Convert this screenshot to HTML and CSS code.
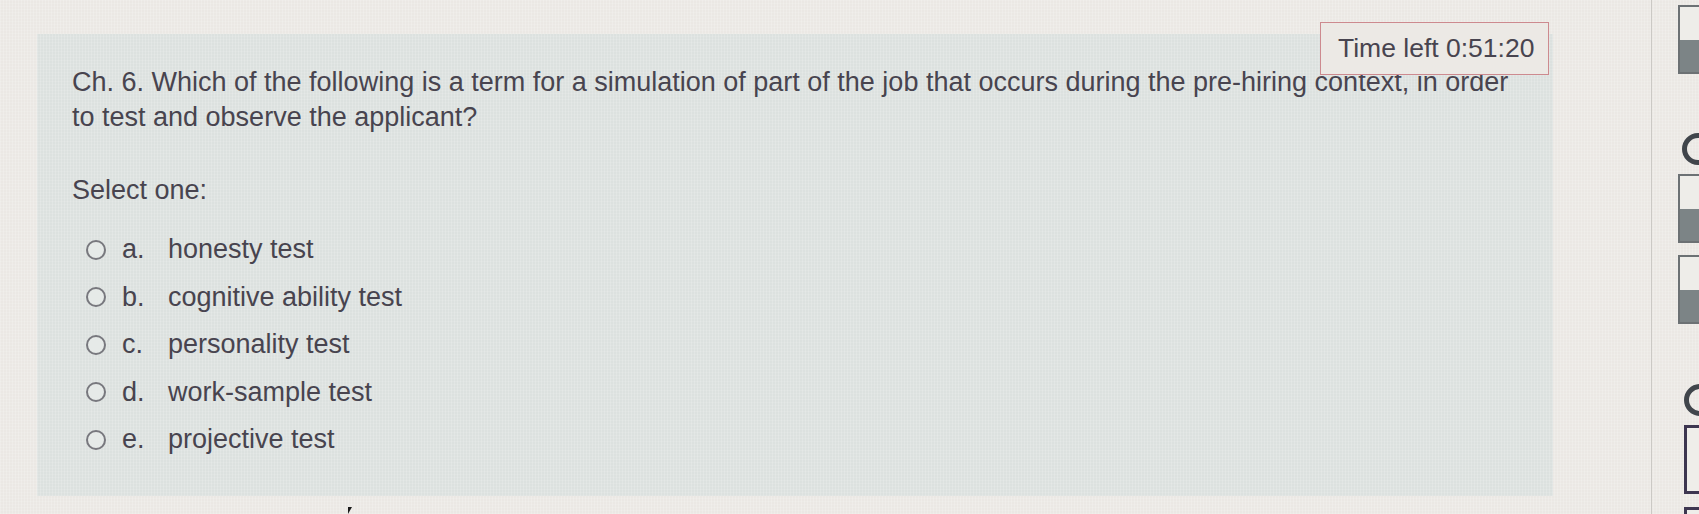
FILE: index.html
```html
<!DOCTYPE html>
<html lang="en">
<head>
<meta charset="utf-8">
<title>Quiz question</title>
<link rel="stylesheet" href="styles.css">
</head>
<body>
<div class="page">
  <main class="main">
    <div class="timer">Time left 0:51:20</div>
    <section class="panel">
      <p class="question">Ch. 6. Which of the following is a term for a simulation of part of the job that occurs during the pre-hiring context, in order to test and observe the applicant?</p>
      <p class="prompt">Select one:</p>
      <ul class="options">
        <li class="option"><span class="radio"></span><span class="letter">a.</span><span class="label">honesty test</span></li>
        <li class="option"><span class="radio"></span><span class="letter">b.</span><span class="label">cognitive ability test</span></li>
        <li class="option"><span class="radio"></span><span class="letter">c.</span><span class="label">personality test</span></li>
        <li class="option"><span class="radio"></span><span class="letter">d.</span><span class="label">work-sample test</span></li>
        <li class="option"><span class="radio"></span><span class="letter">e.</span><span class="label">projective test</span></li>
      </ul>
    </section>
    <div class="cursor"></div>
  </main>
  <aside class="sidebar">
    <div class="navbox split first"><span class="top"></span><span class="bottom"></span></div>
    <div class="ring ring1"></div>
    <div class="navbox split gap9"><span class="top"></span><span class="bottom"></span></div>
    <div class="navbox split gap12"><span class="top"></span><span class="bottom"></span></div>
    <div class="ring ring2"></div>
    <div class="navbox current gap9"></div>
    <div class="navbox current gap13"></div>
  </aside>
</div>
</body>
</html>
```

FILE: styles.css
```css
html, body {
  margin: 0;
  padding: 0;
}

body {
  width: 1699px;
  height: 514px;
  overflow: hidden;
  background-color: #ebe8e4;
  background-image:
    repeating-linear-gradient(90deg, rgba(255,255,255,0.18) 0 1px, transparent 1px 3px),
    repeating-linear-gradient(0deg, rgba(255,255,255,0.12) 0 1px, transparent 1px 3px);
  font-family: "Liberation Sans", Arial, Helvetica, sans-serif;
  color: #48444f;
}

.page {
  display: flex;
  height: 514px;
}

.main {
  position: relative;
  flex: none;
  width: 1651px;
  box-sizing: border-box;
  padding: 34px 0 0 37px;
}

.panel {
  width: 1516px;
  height: 462px;
  box-sizing: border-box;
  padding: 31px 30px 0 35px;
  background-color: #dce1df;
  background-image:
    repeating-linear-gradient(90deg, rgba(255,255,255,0.16) 0 1px, transparent 1px 3px),
    repeating-linear-gradient(0deg, rgba(255,255,255,0.10) 0 1px, transparent 1px 3px);
}

.timer {
  position: absolute;
  left: 1320px;
  top: 22px;
  width: 229px;
  height: 53px;
  box-sizing: border-box;
  padding-left: 17px;
  border: 1.5px solid #cd8a8f;
  background-color: #ece9e5;
  font-size: 26.5px;
  line-height: 50px;
  white-space: nowrap;
  z-index: 2;
}

.question {
  margin: 0;
  font-size: 27px;
  line-height: 35px;
}

.prompt {
  margin: 38px 0 0;
  font-size: 27px;
  line-height: 35px;
}

.options {
  list-style: none;
  margin: 18px 0 0;
  padding: 0;
}

.option {
  display: flex;
  align-items: center;
  height: 47.5px;
  font-size: 27px;
  line-height: 47.5px;
}

.radio {
  flex: none;
  width: 20px;
  height: 20px;
  box-sizing: border-box;
  margin-left: 14px;
  margin-right: 16px;
  border: 2.5px solid #78787e;
  border-radius: 50%;
  background-color: #e6eae8;
}

.letter {
  flex: none;
  width: 46px;
}

.cursor {
  position: absolute;
  left: 348px;
  top: 507px;
  width: 0;
  height: 0;
  border-left: 4px solid #1a1a1a;
  border-bottom: 7px solid transparent;
}

.sidebar {
  flex: 1;
  display: flex;
  flex-direction: column;
  border-left: 1px solid #cbc9c5;
  padding-left: 26px;
  overflow: hidden;
}

.navbox {
  flex: none;
  width: 44px;
  height: 69px;
  box-sizing: border-box;
  display: flex;
  flex-direction: column;
}

.navbox.split {
  border: 2px solid #6c7174;
}

.navbox.split .top {
  flex: 1;
  background-color: #eeede9;
}

.navbox.split .bottom {
  height: 32px;
  background-color: #7c8486;
}

.navbox.current {
  border: 3px solid #3d3650;
  background-color: #efeeea;
  margin-left: 6px;
}

.first { margin-top: 5px; }
.gap9 { margin-top: 9px; }
.gap12 { margin-top: 12px; }
.gap13 { margin-top: 13px; }

.ring {
  flex: none;
  width: 32px;
  height: 32px;
  box-sizing: border-box;
  border: 5px solid #40454b;
  border-radius: 50%;
  margin-left: 4px;
}

.ring1 { margin-top: 59px; }
.ring2 { margin-top: 60px; margin-left: 6px; }
```
